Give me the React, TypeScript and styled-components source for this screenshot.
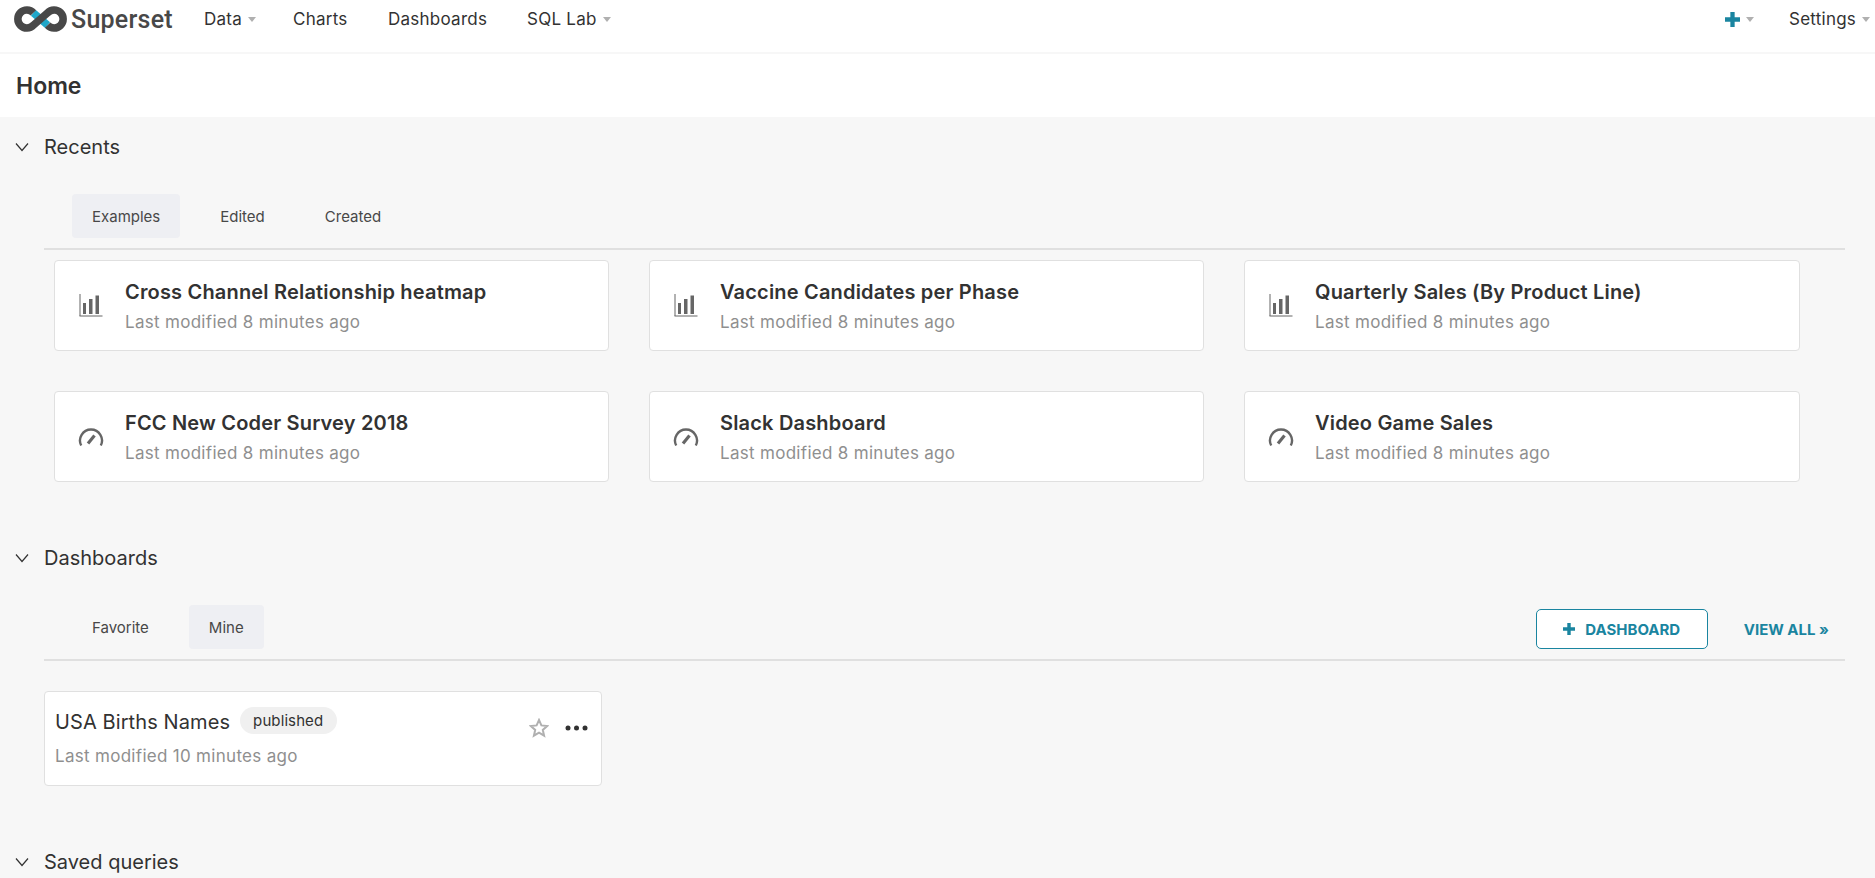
import React from "react";
import styled, { createGlobalStyle } from "styled-components";

const Global = createGlobalStyle`
  html, body { margin: 0; padding: 0; height: 100%; overflow: hidden; background: #f7f7f7; }
  body { font-family: Inter, "Liberation Sans", sans-serif; color: #323232; }
  * { box-sizing: border-box; }
`;

const Page = styled.div`
  height: 878px;
  overflow: hidden;
  background: #f7f7f7;
`;

const NavBar = styled.nav`
  height: 54px;
  background: #fff;
  border-bottom: 2px solid #f7f7f7;
  padding: 0 3px 14px 14px;
  display: flex;
  align-items: center;
`;

const Brand = styled.div`
  display: flex;
  align-items: center;
  gap: 4px;
  width: 190px;
`;

const BrandName = styled.span`
  font-family: Roboto, sans-serif;
  font-weight: 500;
  font-size: 25px;
  letter-spacing: 0.25px;
  color: #484848;
`;

const NavItem = styled.a<{ $w: number }>`
  display: flex;
  align-items: center;
  width: ${(p) => p.$w}px;
  font-size: 17px;
  letter-spacing: 0.25px;
  color: #323232;
  white-space: nowrap;
`;

const Caret = styled.i`
  display: block;
  margin-left: 6px;
  width: 0;
  height: 0;
  border-left: 4px solid transparent;
  border-right: 4px solid transparent;
  border-top: 5px solid #b0b0b0;
`;

const Spacer = styled.div`
  flex: 1;
`;

const HomeBar = styled.header`
  height: 63px;
  background: #fff;
  padding: 0 16px;
  display: flex;
  align-items: center;
  font-size: 23px;
  font-weight: 600;
  color: #323232;
`;

const Section = styled.section<{ $bottom: number }>`
  margin-bottom: ${(p) => p.$bottom}px;
`;

const SectionHead = styled.div`
  height: 60px;
  display: flex;
  align-items: center;
  padding-left: 15px;
  gap: 15px;
  font-size: 20px;
  color: #323232;
`;

const TabBar = styled.div`
  margin: 17px 30px 0 44px;
  padding: 0 16px 10px 28px;
  border-bottom: 2px solid #e0e0e0;
  display: flex;
  align-items: flex-end;
  gap: 20px;
`;

const Tab = styled.div<{ $active?: boolean }>`
  height: 44px;
  padding: 0 20px;
  display: flex;
  align-items: center;
  font-size: 15px;
  border-radius: 4px;
  color: #484848;
  background: ${(p) => (p.$active ? "#eeeff3" : "transparent")};
`;

const OutlineButton = styled.button`
  margin-left: auto;
  margin-right: 16px;
  width: 172px;
  height: 40px;
  display: flex;
  align-items: center;
  justify-content: center;
  gap: 10px;
  background: #fff;
  border: 1px solid #1a85a0;
  border-radius: 5px;
  color: #1a85a0;
  font-family: inherit;
  font-weight: 700;
  font-size: 15px;
`;

const ViewAll = styled.a`
  height: 40px;
  display: flex;
  align-items: center;
  color: #1a85a0;
  font-weight: 700;
  font-size: 15px;
  white-space: nowrap;
`;

const RecentGrid = styled.div`
  margin: 10px 70px 0 54px;
  display: grid;
  grid-template-columns: 555px 555px 556px;
  column-gap: 40px;
  row-gap: 40px;
`;

const RecentCard = styled.div`
  height: 91px;
  background: #fff;
  border: 1px solid #e0e0e0;
  border-radius: 4px;
  padding: 0 0 0 23px;
  display: flex;
  align-items: center;
  gap: 21px;
`;

const IconBox = styled.div`
  width: 26px;
  height: 26px;
  flex: none;
  color: #666;
  display: flex;
  align-items: center;
  justify-content: center;
`;

const CardText = styled.div`
  display: flex;
  flex-direction: column;
  gap: 7px;
  padding-top: 1px;
`;

const CardTitle = styled.div`
  font-size: 20px;
  font-weight: 600;
  line-height: 24px;
  letter-spacing: 0.18px;
  color: #323232;
  white-space: nowrap;
`;

const Muted = styled.div`
  font-size: 17px;
  line-height: 22px;
  letter-spacing: 0.3px;
  color: #8f8f8f;
  white-space: nowrap;
`;

const DashCard = styled.div`
  margin: 30px 0 0 44px;
  width: 558px;
  height: 95px;
  background: #fff;
  border: 1px solid #e0e0e0;
  border-radius: 4px;
  padding: 15px 13px 0 10px;
  display: flex;
  justify-content: space-between;
`;

const TitleRow = styled.div`
  display: flex;
  align-items: center;
  gap: 10px;
  height: 30px;
  margin-bottom: 8px;
`;

const DashTitle = styled.div`
  font-size: 20px;
  letter-spacing: 0.1px;
  color: #323232;
`;

const Pill = styled.span`
  height: 27px;
  padding: 0 14px 0 13px;
  margin-top: -3px;
  display: flex;
  align-items: center;
  border-radius: 14px;
  background: #f0f0f0;
  font-size: 15px;
  letter-spacing: 0.1px;
  color: #323232;
`;

const Actions = styled.div`
  display: flex;
  align-items: center;
  gap: 16px;
  height: 42px;
`;

const Chevron = () => (
  <svg width="14" height="10" viewBox="0 0 14 10" fill="none" stroke="#323232" strokeWidth="1.2">
    <path d="M1 1.5 7 8.5 13 1.5" />
  </svg>
);

const Logo = () => (
  <svg width="53" height="26" viewBox="-1.5 -0.5 56 27" fill="none" strokeWidth="8">
    <path d="M19 6.5 34 19.5" stroke="#20a7c9" />
    <path d="M19 6.5A9.5 9.5 0 1 0 19 19.5L34 6.5A9.5 9.5 0 1 1 34 19.5" stroke="#484848" />
  </svg>
);

const ChartIcon = () => (
  <svg width="24" height="23" viewBox="0 0 24 23" fill="#666">
    <rect x="0.5" y="0" width="1" height="22" />
    <rect x="0.5" y="21.5" width="23" height="1" />
    <rect x="4" y="9" width="3" height="11" />
    <rect x="10" y="5" width="3.5" height="15" />
    <rect x="16.5" y="1.5" width="3.5" height="18.5" />
  </svg>
);

const GaugeIcon = () => (
  <svg width="26" height="22" viewBox="0 1 26 22" fill="none" stroke="#666">
    <path d="M3.2 20.5A11 11 0 1 1 22.8 20.5" strokeWidth="2.4" />
    <path d="M10 18.5 16.5 10.5" strokeWidth="3.2" />
  </svg>
);

const PlusIcon = ({ size, width = 4 }: { size: number; width?: number }) => (
  <svg width={size} height={size} viewBox="0 0 14 14" stroke="#1a85a0" strokeWidth={width}>
    <path d="M7 0V14M0 7H14" />
  </svg>
);

const StarIcon = () => (
  <svg width="20" height="20" viewBox="0 0 20 20" fill="none" stroke="#b0b0b0" strokeWidth="2">
    <path d="M10 2 12.4 7.4 18.2 8 13.8 11.9 15.1 17.7 10 14.7 4.9 17.7 6.2 11.9 1.8 8 7.6 7.4Z" />
  </svg>
);

const DotsIcon = () => (
  <svg width="23" height="6" viewBox="0 0 23 6" fill="#323232">
    <circle cx="3" cy="3" r="2.5" />
    <circle cx="11.5" cy="3" r="2.5" />
    <circle cx="20" cy="3" r="2.5" />
  </svg>
);

const charts = [
  "Cross Channel Relationship heatmap",
  "Vaccine Candidates per Phase",
  "Quarterly Sales (By Product Line)",
];
const boards = ["FCC New Coder Survey 2018", "Slack Dashboard", "Video Game Sales"];

export default function App() {
  return (
    <Page>
      <Global />
      <NavBar>
        <Brand>
          <Logo />
          <BrandName>Superset</BrandName>
        </Brand>
        <NavItem $w={89}>Data<Caret /></NavItem>
        <NavItem $w={95}>Charts</NavItem>
        <NavItem $w={139}>Dashboards</NavItem>
        <NavItem $w={100}>SQL Lab<Caret /></NavItem>
        <Spacer />
        <NavItem $w={64}><PlusIcon size={15} /><Caret /></NavItem>
        <NavItem $w={83}>Settings<Caret /></NavItem>
      </NavBar>
      <HomeBar>Home</HomeBar>

      <Section $bottom={46}>
        <SectionHead><Chevron />Recents</SectionHead>
        <TabBar>
          <Tab $active>Examples</Tab>
          <Tab>Edited</Tab>
          <Tab>Created</Tab>
        </TabBar>
        <RecentGrid>
          {charts.map((t) => (
            <RecentCard key={t}>
              <IconBox><ChartIcon /></IconBox>
              <CardText>
                <CardTitle>{t}</CardTitle>
                <Muted>Last modified 8 minutes ago</Muted>
              </CardText>
            </RecentCard>
          ))}
          {boards.map((t) => (
            <RecentCard key={t}>
              <IconBox><GaugeIcon /></IconBox>
              <CardText>
                <CardTitle>{t}</CardTitle>
                <Muted>Last modified 8 minutes ago</Muted>
              </CardText>
            </RecentCard>
          ))}
        </RecentGrid>
      </Section>

      <Section $bottom={46}>
        <SectionHead><Chevron />Dashboards</SectionHead>
        <TabBar>
          <Tab>Favorite</Tab>
          <Tab $active>Mine</Tab>
          <OutlineButton><PlusIcon size={12} />DASHBOARD</OutlineButton>
          <ViewAll>VIEW ALL »</ViewAll>
        </TabBar>
        <DashCard>
          <div>
            <TitleRow>
              <DashTitle>USA Births Names</DashTitle>
              <Pill>published</Pill>
            </TitleRow>
            <Muted>Last modified 10 minutes ago</Muted>
          </div>
          <Actions><StarIcon /><DotsIcon /></Actions>
        </DashCard>
      </Section>

      <SectionHead><Chevron />Saved queries</SectionHead>
    </Page>
  );
}
